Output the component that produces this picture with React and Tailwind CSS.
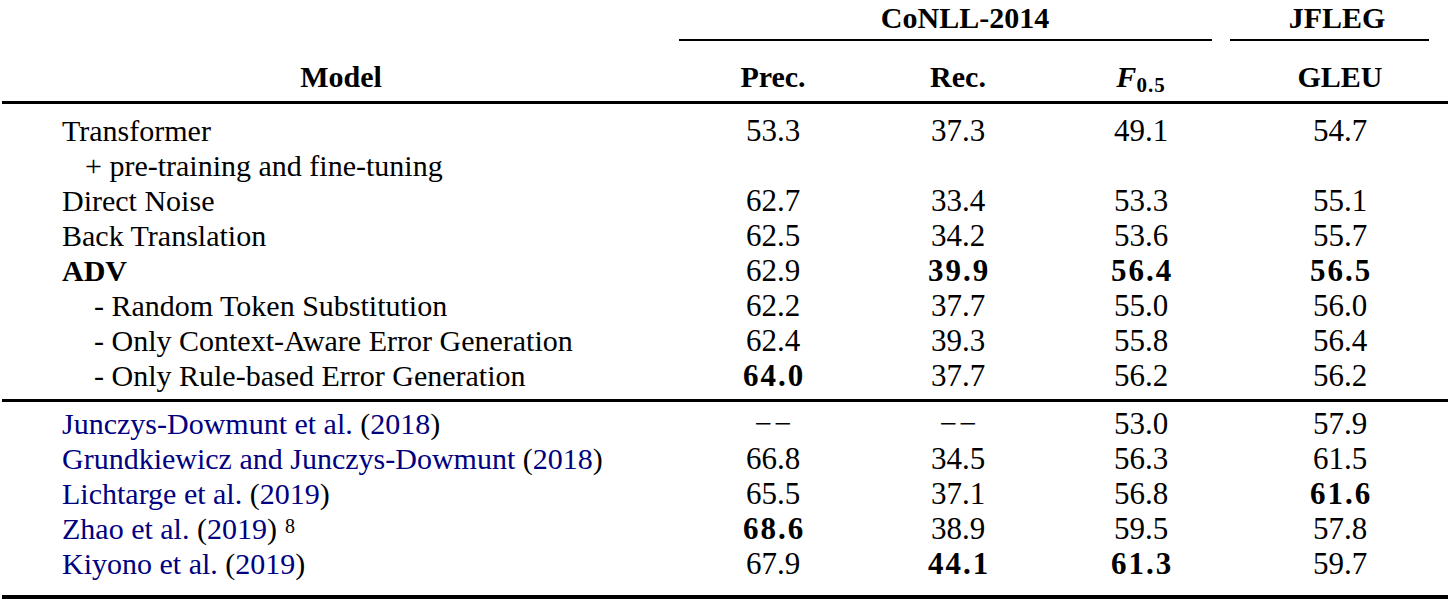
import React from 'react'

const cols = 'grid grid-cols-[678px_186px_184px_182px_216px]'

const ours = [
    { name: 'Transformer', v: ['53.3', '37.3', '49.1', '54.7'] },
    { name: '+ pre-training and fine-tuning', indent: 'pl-[83px]' },
    { name: 'Direct Noise', v: ['62.7', '33.4', '53.3', '55.1'] },
    { name: 'Back Translation', v: ['62.5', '34.2', '53.6', '55.7'] },
    { name: 'ADV', bold: true, v: ['62.9', '39.9', '56.4', '56.5'], b: [1, 2, 3] },
    { name: '- Random Token Substitution', indent: 'pl-[92px]', v: ['62.2', '37.7', '55.0', '56.0'] },
    { name: '- Only Context-Aware Error Generation', indent: 'pl-[92px]', v: ['62.4', '39.3', '55.8', '56.4'] },
    { name: '- Only Rule-based Error Generation', indent: 'pl-[92px]', v: ['64.0', '37.7', '56.2', '56.2'], b: [0] },
]

const others = [
    { who: 'Junczys-Dowmunt et al.', year: '2018', v: ['−−', '−−', '53.0', '57.9'] },
    { who: 'Grundkiewicz and Junczys-Dowmunt', year: '2018', v: ['66.8', '34.5', '56.3', '61.5'] },
    { who: 'Lichtarge et al.', year: '2019', v: ['65.5', '37.1', '56.8', '61.6'], b: [3] },
    { who: 'Zhao et al.', year: '2019', note: '8', v: ['68.6', '38.9', '59.5', '57.8'], b: [0] },
    { who: 'Kiyono et al.', year: '2019', v: ['67.9', '44.1', '61.3', '59.7'], b: [1, 2] },
]

function Nums({ v, b = [] }) {
    if (!v) return null
    return v.map((n, i) => (
        <div key={i} className='text-center text-[31px]'>
            {b.includes(i)
                ? <span className='font-bold tracking-[2px] pl-[2px]'>{n}</span>
                : n === '−−'
                    ? <span className='tracking-[2px] pl-[2px]'>{n}</span>
                    : n}
        </div>
    ))
}

export default function App() {
  return (
    <div className="w-[1453px] h-[603px] overflow-hidden bg-white text-black font-['Liberation_Serif',serif] text-[30px] leading-[35px]">
        <div className='ml-[2px] w-[1446px]'>
            {/* GROUP HEADER */}
            <div className={cols + ' h-[35px] font-bold'}>
                <div></div>
                <div className='col-span-3 text-center pl-[18px]'>CoNLL-2014</div>
                <div className='text-center pr-[6px]'>JFLEG</div>
            </div>
            <div className='flex mt-[4px]'>
                <div className='w-[677px]'></div>
                <div className='w-[533px] h-[2px] bg-black'></div>
                <div className='w-[18px]'></div>
                <div className='w-[199px] h-[2px] bg-black'></div>
            </div>
            {/* COLUMN HEADER */}
            <div className={cols + ' h-[35px] mt-[18px] font-bold'}>
                <div className='text-center'>Model</div>
                <div className='text-center'>Prec.</div>
                <div className='text-center'>Rec.</div>
                <div className='text-center'>
                    <span className='italic'>F</span>
                    <span className='text-[21px] relative top-[5px] tracking-[1px]'>0.5</span>
                </div>
                <div className='text-center'>GLEU</div>
            </div>
            <div className='h-[3px] bg-black mt-[7px]'></div>

            {/* OUR MODELS */}
            <div className='mt-[9px]'>
                {ours.map((r, i) => (
                    <div key={i} className={cols + ' h-[35px] items-baseline'}>
                        <div className={(r.indent || 'pl-[60px]') + (r.bold ? ' font-bold' : '') + ' whitespace-nowrap'}>
                            {r.name}
                        </div>
                        <Nums v={r.v} b={r.b} />
                    </div>
                ))}
            </div>
            <div className='h-[3px] bg-black mt-[6px]'></div>

            {/* PREVIOUS WORK */}
            <div className='mt-[4px]'>
                {others.map((r, i) => (
                    <div key={i} className={cols + ' h-[35px] items-baseline'}>
                        <div className='pl-[60px] whitespace-nowrap'>
                            <span className='text-[#000080]'>{r.who}</span> (<span className='text-[#000080]'>{r.year}</span>)
                            <sup className='text-[20px] ml-[8px] relative -top-[6px]'>{r.note}</sup>
                        </div>
                        <Nums v={r.v} b={r.b} />
                    </div>
                ))}
            </div>
            <div className='h-[4px] bg-black mt-[14px]'></div>
        </div>
    </div>
  )
}
